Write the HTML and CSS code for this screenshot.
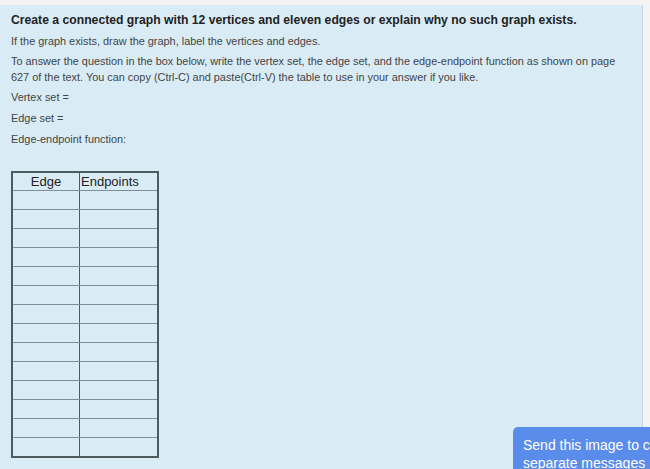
FILE: index.html
```html
<!DOCTYPE html>
<html>
<head>
<meta charset="utf-8">
<link rel="stylesheet" href="styles.css">
</head>
<body>
<div class="page">
  <div class="panel">
    <h1 class="title">Create a connected graph with 12 vertices and eleven edges or explain why no such graph exists.</h1>
    <p class="txt">If the graph exists, draw the graph, label the vertices and edges.</p>
    <p class="txt">To answer the question in the box below, write the vertex set, the edge set, and the edge-endpoint function as shown on page 627 of the text. You can copy (Ctrl-C) and paste(Ctrl-V) the table to use in your answer if you like.</p>
    <p class="txt">Vertex set =</p>
    <p class="txt">Edge set =</p>
    <p class="txt">Edge-endpoint function:</p>
    <table class="ee">
      <thead>
        <tr><th class="c1">Edge</th><th class="c2">Endpoints</th></tr>
      </thead>
      <tbody>
        <tr><td></td><td></td></tr>
        <tr><td></td><td></td></tr>
        <tr><td></td><td></td></tr>
        <tr><td></td><td></td></tr>
        <tr><td></td><td></td></tr>
        <tr><td></td><td></td></tr>
        <tr><td></td><td></td></tr>
        <tr><td></td><td></td></tr>
        <tr><td></td><td></td></tr>
        <tr><td></td><td></td></tr>
        <tr><td></td><td></td></tr>
        <tr><td></td><td></td></tr>
        <tr><td></td><td></td></tr>
        <tr><td></td><td></td></tr>
      </tbody>
    </table>
  </div>
</div>
<div class="send">Send this image to c<br>separate messages</div>
</body>
</html>
```

FILE: styles.css
```css
html, body {
  margin: 0;
  padding: 0;
  background: #f4f2f2;
  width: 650px;
  height: 469px;
  overflow: hidden;
  font-family: "Liberation Sans", Arial, sans-serif;
  color: #333;
}
.page {
  padding-top: 5px;
  background: #f4f2f2;
}
.panel {
  width: 631px;
  height: 470px;
  background: #d9ecf6;
  border-right: 1px solid #c4dbe6;
  padding: 7px 0 0 11px;
  box-sizing: content-box;
}
.title {
  margin: 0 0 5px 0;
  font-size: 12.2px;
  font-weight: bold;
  line-height: 16px;
  color: #222;
}
.txt {
  margin: 0 0 4px 0;
  max-width: 612px;
  font-size: 10.9px;
  line-height: 16px;
  color: #444;
}
.txt + .txt + .txt + .txt {
  margin-top: 5px;
}
.ee {
  margin-top: 24px;
  border-collapse: collapse;
  border: 2px solid #4d5a60;
  font-size: 13px;
}
.ee th {
  font-weight: normal;
  height: 17px;
  padding: 0;
  line-height: 17px;
  color: #222;
  border-bottom: 1px solid #7f8e96;
}
.ee .c1 {
  width: 66px;
  text-align: center;
  border-right: 1px solid #4d5a60;
}
.ee .c2 {
  width: 76px;
  text-align: left;
  padding-left: 1px;
}
.ee td {
  height: 18px;
  padding: 0;
  border-bottom: 1px solid #7f8e96;
}
.ee td:first-child {
  border-right: 1px solid #4d5a60;
}
.send {
  position: absolute;
  left: 513px;
  top: 427px;
  width: 137px;
  height: 50px;
  background: #5a8cec;
  border-radius: 5px 0 0 0;
  color: #fff;
  font-size: 14px;
  line-height: 18px;
  padding: 9px 0 0 10px;
  box-sizing: border-box;
  white-space: nowrap;
  overflow: hidden;
}
```
